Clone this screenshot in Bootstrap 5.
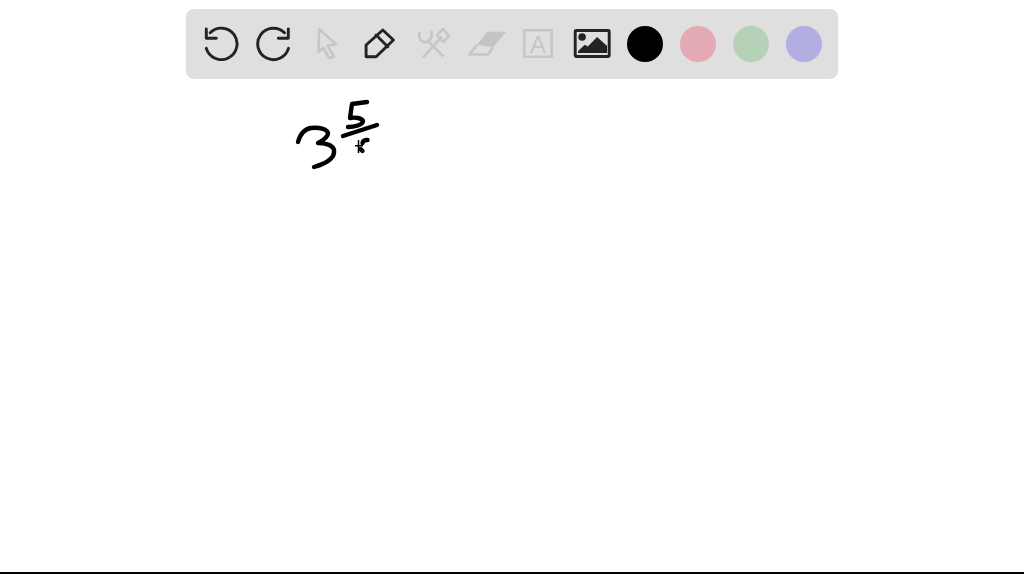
<!DOCTYPE html>
<html lang="en">

<head>
    <meta charset="UTF-8">
    <title>Whiteboard</title>
    <meta name="viewport" content="width=device-width, initial-scale=1">
    <link href="https://cdn.jsdelivr.net/npm/bootstrap@5.3.3/dist/css/bootstrap.min.css" rel="stylesheet">
    <style>
        html, body {
            height: 100%;
        }

        body {
            background-color: #fff;
            font-family: "Liberation Sans", Arial, sans-serif;
            overflow: hidden;
        }

        .board-page {
            height: 574px;
        }

        .board-canvas {
            min-height: 0;
        }

        .tool-strip {
            display: grid;
            grid-template-columns: repeat(12, 1fr);
            width: 652px;
            height: 70px;
            margin: 9px 0 0 186px;
            padding: 0 8px 0 10px;
            background-color: #dfdfdf;
            align-items: center;
            justify-items: center;
        }

        .tool-btn {
            width: 40px;
            height: 40px;
            line-height: 0;
        }

        .tool-btn svg {
            width: 40px;
            height: 40px;
            display: block;
            overflow: visible;
            filter: blur(0.4px);
        }

        .ink {
            fill: none;
            stroke: #232323;
            stroke-width: 2.9;
            stroke-linecap: round;
            stroke-linejoin: round;
        }

        .ink-off {
            fill: none;
            stroke: #c6c6c6;
            stroke-width: 2.6;
            stroke-linejoin: round;
        }

        .swatch {
            width: 36px;
            height: 36px;
        }

        .swatch-black { background-color: #000; }
        .swatch-pink { background-color: #e3a9b5; }
        .swatch-green { background-color: #b5d2b8; }
        .swatch-violet { background-color: #b3aee1; }

        .sketch {
            position: absolute;
            left: 0;
            top: 0;
            width: 1024px;
            height: 492px;
            filter: blur(0.5px);
        }

        .sketch path {
            fill: none;
            stroke: #000;
            stroke-width: 4.4;
            stroke-linecap: round;
            stroke-linejoin: round;
        }

        .sketch .cross-hair {
            stroke-width: 1.5;
            stroke-linecap: butt;
        }

        .page-edge {
            height: 2px;
            background-color: #000;
        }
    </style>
</head>

<body>
    <div class="board-page d-flex flex-column">

        <!-- Toolbar -->
        <div class="tool-strip rounded-3">
            <button class="tool-btn btn p-0 border-0" type="button" aria-label="Undo">
                <svg viewBox="0 0 40 40"><path class="ink" d="M4.3 24.3A15.7 15.7 0 1 0 8.2 8.8M4.3 5V14.3H14.3"/></svg>
            </button>
            <button class="tool-btn btn p-0 border-0" type="button" aria-label="Redo">
                <svg viewBox="0 0 40 40"><path class="ink" d="M33.5 24.3A15.7 15.7 0 1 1 29.5 8.8M33.3 5V14.3H23.3"/></svg>
            </button>
            <button class="tool-btn btn p-0 border-0" type="button" aria-label="Select">
                <svg viewBox="0 0 40 40"><path class="ink-off" d="M11.2 5 27.9 20.3 19.6 21.7 25.9 32.7 20.9 34 15.2 23.7 10.6 27.7Z"/></svg>
            </button>
            <button class="tool-btn btn p-0 border-0" type="button" aria-label="Pen">
                <svg viewBox="0 0 40 40"><path class="ink" d="M5.1 21 21.8 6 32.4 16 15.1 32.7H5.1ZM15.1 11 26.8 22.7"/></svg>
            </button>
            <button class="tool-btn btn p-0 border-0" type="button" aria-label="Tools">
                <svg viewBox="0 0 40 40">
                    <path class="ink-off" d="M9 33.3 28 12.7M29.5 32.7 13 16M6 8C3 14 8 19 12 18 17 17 19 12 17 7"/>
                    <path class="ink-off" d="M29 5 35 12 29 18 23 11Z"/>
                </svg>
            </button>
            <button class="tool-btn btn p-0 border-0" type="button" aria-label="Eraser">
                <svg viewBox="0 0 40 40">
                    <path d="M20 7.7H39.4L26 23.3 10 21Z" fill="#c4c4c4"/>
                    <path class="ink-off" d="M10 21 2.5 30.5H21L26 23.3"/>
                </svg>
            </button>
            <button class="tool-btn btn p-0 border-0" type="button" aria-label="Text">
                <svg viewBox="0 0 40 40">
                    <rect class="ink-off" x="5.2" y="6.2" width="27.5" height="26.5"/>
                    <text x="18.9" y="28.5" text-anchor="middle" font-size="24" fill="#c6c6c6" font-family="Liberation Sans, Arial, sans-serif">A</text>
                </svg>
            </button>
            <button class="tool-btn btn p-0 border-0" type="button" aria-label="Image">
                <svg viewBox="0 0 40 40">
                    <rect class="ink" x="3.2" y="6.5" width="34" height="26" rx="1"/>
                    <circle cx="10.1" cy="13" r="3.8" fill="#232323"/>
                    <path d="M6.1 29V27L12.8 20.7 15.8 22.5 25.1 13 35.1 22V29Z" fill="#232323"/>
                </svg>
            </button>
            <span class="swatch swatch-black rounded-circle"></span>
            <span class="swatch swatch-pink rounded-circle"></span>
            <span class="swatch swatch-green rounded-circle"></span>
            <span class="swatch swatch-violet rounded-circle"></span>
        </div>

        <!-- Handwriting on the board -->
        <div class="board-canvas flex-grow-1 position-relative">
            <svg class="sketch" viewBox="0 79 1024 492">
                <path d="M298 142C300 135 304 129 311 128 319 127 327 129 328 133 328 138 322 141 318 143 325 143 333 145 334 150 335 157 328 163 314 167"/>
                <path d="M367 102 352 104 350 118C355 117 362 118 363 121 363 125 354 127 348 127"/>
                <path d="M343 136 377 125"/>
                <path d="M362.5 143Q363 140 367.5 140"/>
                <path d="M360.5 149 362.5 151"/>
                <path class="cross-hair" d="M358.5 140V153M355 145.7H363"/>
            </svg>
        </div>

        <div class="page-edge"></div>
    </div>

    <script src="https://cdn.jsdelivr.net/npm/bootstrap@5.3.3/dist/js/bootstrap.bundle.min.js"></script>
</body>

</html>
